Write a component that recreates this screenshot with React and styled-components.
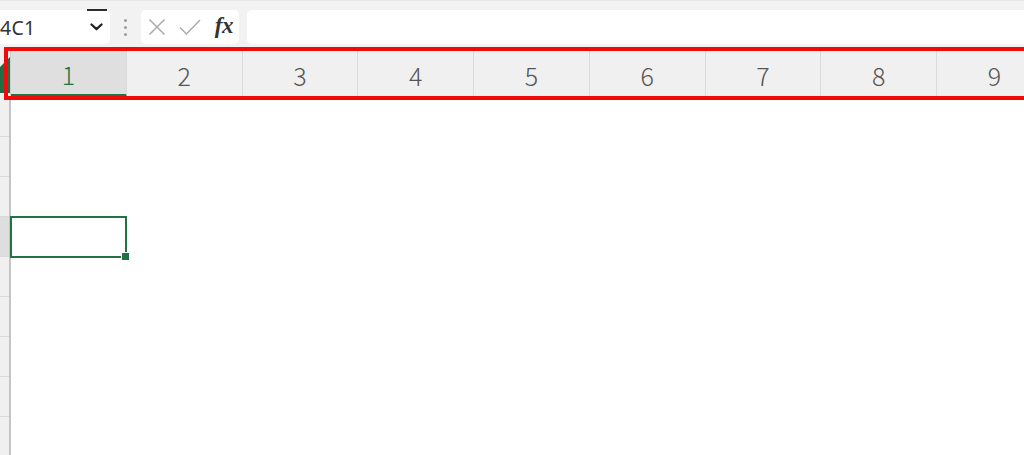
import React from "react";
import styled, { createGlobalStyle } from "styled-components";

const GlobalStyle = createGlobalStyle`
  html, body { margin: 0; padding: 0; background: #ffffff; overflow: hidden; }
  * { box-sizing: border-box; }
`;

const COL_W = 115.75;
const ROW_H = 40;

const Page = styled.div`
  position: relative;
  width: 1024px;
  height: 455px;
  overflow: hidden;
  background: #ffffff;
  font-family: "Noto Sans", "Liberation Sans", sans-serif;
`;

const Toolbar = styled.div`
  display: flex;
  align-items: stretch;
  height: 47px;
  padding: 9px 0 3px 0;
  background: #f2f2f2;
  border-top: 1px solid #e6e6e6;
`;

const NameBox = styled.div`
  position: relative;
  width: 110px;
  display: flex;
  align-items: center;
  justify-content: space-between;
  padding: 0 7px 0 0;
  background: #ffffff;
  border-radius: 0 5px 5px 0;
`;

const NameText = styled.span`
  font-family: "Noto Sans", "Liberation Sans", sans-serif;
  font-size: 19.5px;
  color: #333333;
  letter-spacing: 0.3px;
`;

const TopMark = styled.div`
  position: absolute;
  top: -1px;
  right: 3px;
  width: 20px;
  height: 2px;
  background: #2b2b2b;
`;

const Grip = styled.div`
  width: 31px;
  display: flex;
  flex-direction: column;
  align-items: center;
  justify-content: center;
  gap: 4px;
`;

const Dot = styled.span`
  width: 3px;
  height: 3px;
  border-radius: 50%;
  background: #9a9a9a;
`;

const FxButtons = styled.div`
  width: 98px;
  display: flex;
  align-items: center;
  justify-content: space-between;
  padding: 0 6px 0 7px;
  background: #ffffff;
  border-radius: 5px;
`;

const FxLabel = styled.span`
  font-family: "Liberation Serif", "DejaVu Serif", serif;
  font-style: italic;
  font-weight: 700;
  font-size: 23px;
  color: #333333;
  line-height: 1;
  margin-top: -3px;
  letter-spacing: -0.5px;
`;

const FormulaInput = styled.div`
  flex: 1;
  margin-left: 8px;
  background: #ffffff;
  border-radius: 5px 0 0 5px;
`;

const HeaderRow = styled.div`
  display: flex;
  height: 50px;
  background: #f0f0f0;
`;

const Corner = styled.div`
  flex: 0 0 11px;
  height: 100%;
  border-right: 1px solid #cfcfcf;
  background: #f0f0f0;
`;

const ColHeader = styled.div`
  flex: 0 0 ${COL_W}px;
  display: flex;
  align-items: center;
  justify-content: center;
  padding-top: 7px;
  border-right: 1px solid #dadada;
  border-bottom: ${(p) => (p.$active ? "3px solid #217346" : "1px solid #d4d4d4")};
  background: ${(p) => (p.$active ? "#dfdfdf" : "#f0f0f0")};
  color: ${(p) => (p.$active ? "#217346" : "#555555")};
  font-family: "Noto Sans CJK JP", "Noto Sans", sans-serif;
  font-weight: 300;
  font-size: 25px;
`;

const Body = styled.div`
  display: flex;
`;

const RowHeaders = styled.div`
  flex: 0 0 11px;
  display: flex;
  flex-direction: column;
  border-right: 2px solid #c4c4c4;
`;

const RowHead = styled.div`
  height: ${ROW_H}px;
  border-bottom: 1px solid #d9d9d9;
  background: ${(p) => (p.$active ? "#dedede" : "#f0f0f0")};
`;

const Cells = styled.div`
  flex: 1;
  display: flex;
  flex-direction: column;
`;

const Row = styled.div`
  display: flex;
  height: ${ROW_H}px;
`;

const Cell = styled.div`
  position: relative;
  flex: 0 0 ${COL_W}px;
  height: 100%;
  margin-left: -1px;

  ${(p) =>
    p.$selected &&
    `
    &::before {
      content: "";
      position: absolute;
      left: 0;
      top: -1px;
      right: -1px;
      bottom: -1px;
      border: 2px solid #217346;
    }
    &::after {
      content: "";
      position: absolute;
      right: -4px;
      bottom: -4px;
      width: 7px;
      height: 7px;
      background: #217346;
      border: 1px solid #ffffff;
    }
  `}
`;

const Highlight = styled.div`
  position: absolute;
  top: 47px;
  left: 4px;
  width: 1060px;
  height: 53px;
  border: 4.5px solid #f10a0a;
  pointer-events: none;
`;

const CornerMark = styled.svg`
  position: absolute;
  left: 0;
  top: 47px;
`;

const columns = [1, 2, 3, 4, 5, 6, 7, 8, 9];
const rows = [1, 2, 3, 4, 5, 6, 7, 8, 9];

export default function App() {
  return (
    <>
      <GlobalStyle />
      <Page>
        <Toolbar>
          <NameBox>
            <NameText>4C1</NameText>
            <svg width="13" height="8" viewBox="0 0 13 8">
              <path d="M1.5 1.5 L6.5 6.2 L11.5 1.5" fill="none" stroke="#222" strokeWidth="2.3" strokeLinecap="round" strokeLinejoin="round" />
            </svg>
            <TopMark />
          </NameBox>
          <Grip>
            <Dot />
            <Dot />
            <Dot />
          </Grip>
          <FxButtons>
            <svg width="18" height="18" viewBox="0 0 18 18">
              <path d="M1.5 1.5 L16.5 16.5 M16.5 1.5 L1.5 16.5" stroke="#ababab" strokeWidth="1.5" fill="none" />
            </svg>
            <svg width="22" height="18" viewBox="0 0 22 18">
              <path d="M1 9.5 L7.5 16 L21 2" stroke="#ababab" strokeWidth="1.5" fill="none" />
            </svg>
            <FxLabel>fx</FxLabel>
          </FxButtons>
          <FormulaInput />
        </Toolbar>

        <HeaderRow>
          <Corner />
          {columns.map((c) => (
            <ColHeader key={c} $active={c === 1}>
              {c}
            </ColHeader>
          ))}
        </HeaderRow>

        <Body>
          <RowHeaders>
            {rows.map((r) => (
              <RowHead key={r} $active={r === 4} />
            ))}
          </RowHeaders>
          <Cells>
            {rows.map((r) => (
              <Row key={r}>
                {columns.map((c) => (
                  <Cell key={c} $selected={r === 4 && c === 1} />
                ))}
              </Row>
            ))}
          </Cells>
        </Body>

        <CornerMark width="11" height="50" viewBox="0 0 11 50">
          <polygon points="10,10 10,46 -26,46" fill="#1f6e45" />
        </CornerMark>
        <Highlight />
      </Page>
    </>
  );
}
